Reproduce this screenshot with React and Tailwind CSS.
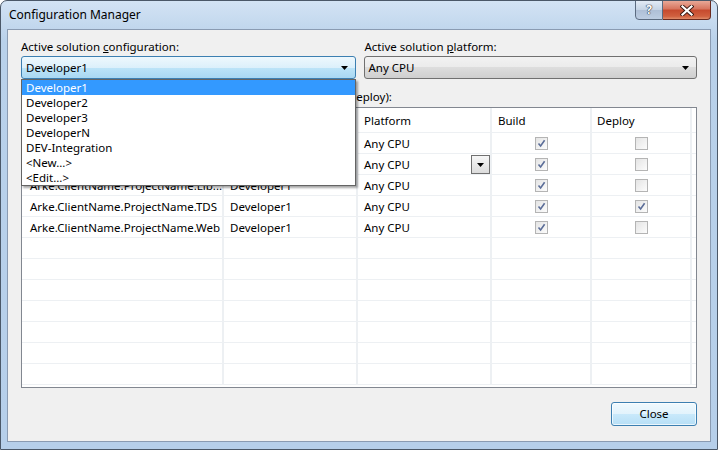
import React from 'react';

const configs = ['Developer1', 'Developer2', 'Developer3', 'DeveloperN', 'DEV-Integration', '<New...>', '<Edit...>'];

const projects = [
  { name: 'Arke.ClientName.ProjectName.Core', config: 'Developer1', build: true, deploy: false },
  { name: 'Arke.ClientName.ProjectName.Data', config: 'Developer1', build: true, deploy: false, editing: true },
  { name: 'Arke.ClientName.ProjectName.Lib...', config: 'Developer1', build: true, deploy: false },
  { name: 'Arke.ClientName.ProjectName.TDS', config: 'Developer1', build: true, deploy: true },
  { name: 'Arke.ClientName.ProjectName.Web', config: 'Developer1', build: true, deploy: false },
];

function Arrow() {
  return (
    <svg width="7" height="4" viewBox="0 0 7 4">
      <polygon points="0,0 7,0 3.5,4" fill="#000" />
    </svg>
  );
}

function CellButton() {
  return (
    <span className="flex h-[19px] w-[19px] items-center justify-center border border-[#707070] bg-[linear-gradient(to_bottom,#f6f6f6,#dcdcdc)]">
      <Arrow />
    </span>
  );
}

function Check({ checked }) {
  return (
    <span className="flex h-[13px] w-[13px] items-center justify-center border border-[#b4b4b4] bg-[linear-gradient(135deg,#e4e4e4,#fcfcfc)]">
      {checked && (
        <svg width="9" height="9" viewBox="0 0 9 9">
          <path d="M1.5 4.5 L3.6 7 L7.6 1.2" fill="none" stroke="#5b6d98" strokeWidth="1.6" />
        </svg>
      )}
    </span>
  );
}

function Row({ p }) {
  return (
    <div className="flex h-[21px] border-b border-[#edf0f3]">
      <div className="flex w-[202px] items-center overflow-hidden whitespace-nowrap border-r-2 border-[#edf0f3] pl-[8px]">{p?.name}</div>
      <div className="flex w-[134px] items-center justify-between border-r-2 border-[#edf0f3] pl-[6px]">
        <span>{p?.config}</span>
        {p?.editing && <span className="self-end"><CellButton /></span>}
      </div>
      <div className="flex w-[134px] items-center justify-between border-r-2 border-[#edf0f3] pl-[6px]">
        <span>{p ? 'Any CPU' : ''}</span>
        {p?.editing && <span className="self-end"><CellButton /></span>}
      </div>
      <div className="flex w-[100px] items-center justify-center border-r-2 border-[#edf0f3]">
        {p && <Check checked={p.build} />}
      </div>
      <div className="flex w-[100px] items-center justify-center border-r-2 border-[#edf0f3]">
        {p && <Check checked={p.deploy} />}
      </div>
      <div className="flex-1" />
    </div>
  );
}

export default function App() {
  const empty = Array.from({ length: 7 });

  return (
    <div className="flex h-[450px] w-[718px] flex-col overflow-hidden rounded-t-[7px] border border-[#4b5868] bg-[linear-gradient(to_bottom,#d3e3f4,#b9d1ea_40px,#b6cfea)] px-[6px] pb-[7px] font-['Segoe_UI','Noto_Sans',sans-serif] text-[11.5px] text-black">
      {/* Title bar */}
      <div className="flex h-[28px] items-start justify-between">
        <span className="pl-[2px] pt-[6px] text-[12px] leading-[15px]">Configuration Manager</span>
        <div className="-mt-px flex">
          <span className="flex h-[20px] w-[28px] items-center justify-center rounded-bl-[4px] border border-[#5b6b80] bg-[linear-gradient(to_bottom,#e2ebf5,#c4d3e4_50%,#aebfd6_50%,#bccde2)] text-[12px] font-bold leading-none text-white [text-shadow:0_0_1px_#2b3444,0_0_1px_#2b3444,0_0_1px_#2b3444]">
            ?
          </span>
          <span className="flex h-[20px] w-[48px] items-center justify-center rounded-br-[4px] border border-l-0 border-[#6b2a1e] bg-[linear-gradient(to_bottom,#e9a897,#d7745d_45%,#c64a2e_50%,#d0603f_85%,#e08c6a)]">
            <svg width="14" height="11" viewBox="0 0 14 11">
              <path d="M2.5 1.5 L11.5 9.5 M11.5 1.5 L2.5 9.5" stroke="#3a1a14" strokeWidth="4" strokeLinecap="square" />
              <path d="M2.5 1.5 L11.5 9.5 M11.5 1.5 L2.5 9.5" stroke="#fff" strokeWidth="2.2" strokeLinecap="square" />
            </svg>
          </span>
        </div>
      </div>

      {/* Client area */}
      <div className="flex flex-1 flex-col border border-[#8a9bb2] bg-[#f0f0f0] px-[13px] pt-[9px]">
        <div className="flex gap-[8px] leading-[15px]">
          <div className="relative w-[335px]">
            <div className="mb-[2px]">
              Active solution <u>c</u>onfiguration:
            </div>
            <div className="flex h-[23px] items-center justify-between rounded-[3px] border border-[#3c7fb1] bg-[linear-gradient(to_bottom,#eef8fd,#dcf0fb_50%,#bde4f8_50%,#a9d8f3)] pl-[4px] pr-[7px]">
              <span>Developer1</span>
              <Arrow />
            </div>
            {/* Open list */}
            <div className="absolute left-0 top-[40px] z-10 w-[335px] border border-[#646464] bg-white shadow-[2px_2px_2px_rgba(0,0,0,0.35)]">
              {configs.map((c, i) => (
                <div
                  key={c}
                  className={`h-[15px] pl-[4px] leading-[15px] ${i === 0 ? 'bg-[#3399ff] text-white' : ''}`}
                >
                  {c}
                </div>
              ))}
            </div>
          </div>
          <div className="w-[334px]">
            <div className="mb-[2px] pl-px">
              Active solution <u>p</u>latform:
            </div>
            <div className="flex h-[23px] items-center justify-between rounded-[3px] border border-[#707070] bg-[linear-gradient(to_bottom,#f2f2f2,#ebebeb_50%,#dddddd_50%,#cfcfcf)] pl-[4px] pr-[7px]">
              <span>Any CPU</span>
              <Arrow />
            </div>
          </div>
        </div>

        <div className="mb-[3px] mt-[10px] leading-[15px]">
          Project <u>c</u>ontexts (check the project configurations to build or deploy):
        </div>

        {/* Grid */}
        <div className="h-[281px] overflow-hidden border border-[#828790] bg-white leading-[15px]">
          <div className="flex h-[25px] border-b border-[#edf0f3]">
            <div className="flex w-[202px] items-center border-r-2 border-[#edf0f3] pl-[6px]">Project</div>
            <div className="flex w-[134px] items-center border-r-2 border-[#edf0f3] pl-[6px]">Configuration</div>
            <div className="flex w-[134px] items-center border-r-2 border-[#edf0f3] pl-[6px]">Platform</div>
            <div className="flex w-[100px] items-center border-r-2 border-[#edf0f3] pl-[6px]">Build</div>
            <div className="flex w-[100px] items-center border-r-2 border-[#edf0f3] pl-[5px]">Deploy</div>
            <div className="flex-1" />
          </div>
          {projects.map((p) => (
            <Row key={p.name} p={p} />
          ))}
          {empty.map((_, i) => (
            <Row key={i} />
          ))}
        </div>

        <div className="mt-[14px] flex justify-end">
          <button className="h-[24px] w-[86px] rounded-[3px] border border-[#3c7fb1] bg-[linear-gradient(to_bottom,#f0f9fe,#e2f3fc_50%,#c9e9fb_50%,#b7dff6)] shadow-[inset_0_0_0_1px_rgba(255,255,255,0.7)]">
            Close
          </button>
        </div>
      </div>
    </div>
  );
}
